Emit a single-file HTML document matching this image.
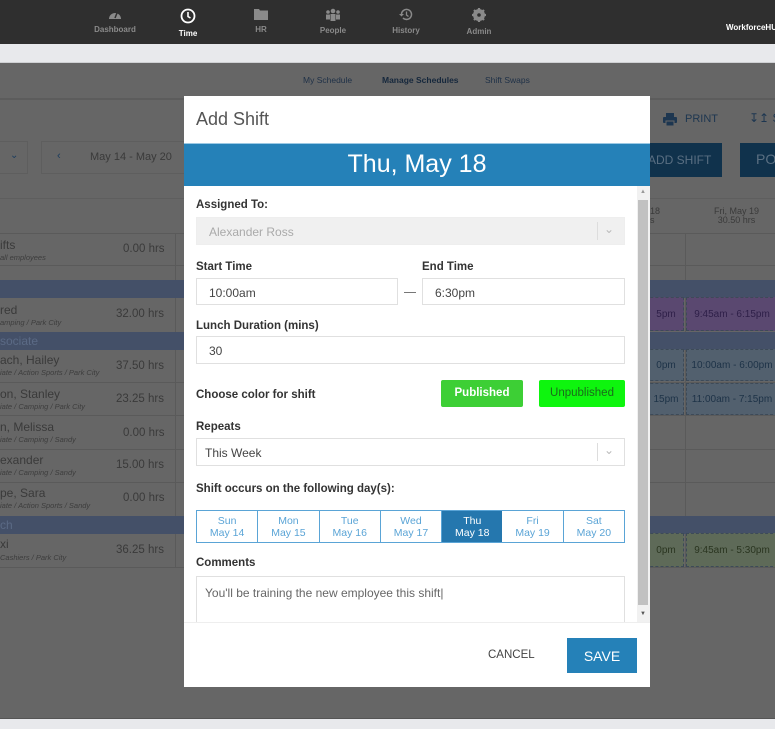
<!DOCTYPE html>
<html><head><meta charset="utf-8"><style>
*{box-sizing:border-box;margin:0;padding:0}
body{width:775px;height:729px;overflow:hidden;position:relative;background:#666;font-family:"Liberation Sans",sans-serif;}
.a{position:absolute}
.nav{left:0;top:0;width:775px;height:44px;background:#2f2f2f}
.ni{position:absolute;top:8px;width:60px;text-align:center;color:#8a8a8a;font-size:8px;font-weight:bold}
.ni svg{display:block;margin:0 auto 5px}
.t{white-space:nowrap}
.row{position:absolute;left:0;width:640px;border-bottom:1px solid #5a5a5a}
.nm{position:absolute;left:0;font-size:12px;color:#3a3a3a}
.sub{position:absolute;left:0;font-size:7.5px;font-style:italic;color:#3d3d3d}
.hrs{position:absolute;right:476px;font-size:12px;color:#3a3a3a}
.sec{position:absolute;left:0;width:775px;height:18px;background:#445068;color:#5b6a85;font-size:12px;padding:2px 0 0 0}
.cell{position:absolute;font-size:10px;text-align:center;border:1px dashed #3d4a58}
.lbl{position:absolute;left:12px;font-size:11.5px;color:#333;font-weight:bold}
.inp{position:absolute;border:1px solid #e0e0e0;background:#fff;font-size:12px;color:#444;padding-left:12px}
</style></head><body>
<div class="a nav">
 <div class="ni" style="left:85px"><svg width="14" height="12" viewBox="0 0 14 12"><path d="M1 11A6 6 0 1 1 13 11Z" fill="#8a8a8a"/><path d="M7 10L9 5" stroke="#2f2f2f" stroke-width="1.5"/></svg>Dashboard</div>
 <div class="ni" style="left:158px;color:#fff;top:8px"><svg width="16" height="16" viewBox="0 0 16 16"><circle cx="8" cy="8" r="6.5" fill="none" stroke="#fff" stroke-width="1.8"/><path d="M8 4V8.5L10.5 10" fill="none" stroke="#fff" stroke-width="1.6"/></svg>Time</div>
 <div class="ni" style="left:231px"><svg width="14" height="12" viewBox="0 0 14 12"><path d="M0 1H5L6 2.5H14V12H0Z" fill="#8a8a8a"/></svg>HR</div>
 <div class="ni" style="left:303px"><svg width="16" height="13" viewBox="0 0 16 13"><circle cx="8" cy="3" r="2.3" fill="#8a8a8a"/><circle cx="3" cy="4" r="1.8" fill="#8a8a8a"/><circle cx="13" cy="4" r="1.8" fill="#8a8a8a"/><rect x="5.5" y="6" width="5" height="7" fill="#8a8a8a"/><rect x="1" y="6.5" width="4" height="5" fill="#8a8a8a"/><rect x="11" y="6.5" width="4" height="5" fill="#8a8a8a"/></svg>People</div>
 <div class="ni" style="left:376px"><svg width="14" height="13" viewBox="0 0 14 13"><path d="M2.5 6.5A5 5 0 1 1 4 10" fill="none" stroke="#8a8a8a" stroke-width="1.5"/><path d="M0 6L2.5 8.5 5 6" fill="#8a8a8a"/><path d="M7.5 3.5V7L9.5 8.5" fill="none" stroke="#8a8a8a" stroke-width="1.3"/></svg>History</div>
 <div class="ni" style="left:449px"><svg width="14" height="14" viewBox="0 0 14 14"><circle cx="7" cy="7" r="4.5" fill="none" stroke="#8a8a8a" stroke-width="3"/><path d="M7 0V14M0 7H14M2 2L12 12M12 2L2 12" stroke="#8a8a8a" stroke-width="2.2"/><circle cx="7" cy="7" r="1.8" fill="#2f2f2f"/></svg>Admin</div>
 <div class="a t" style="left:726px;top:23px;font-size:8px;font-weight:bold;color:#fff">WorkforceHUB</div>
</div>
<div class="a" style="left:0;top:44px;width:775px;height:19px;background:#e8e9ec;border-bottom:1px solid #cfd0d3"></div>
<div class="a" style="left:0;top:98px;width:775px;height:2px;background:#5c5c5c"></div>
<div class="a t" style="left:303px;top:75px;font-size:8.5px;color:#1e3047">My Schedule</div>
<div class="a t" style="left:382px;top:75px;font-size:8.5px;color:#15273c;font-weight:bold">Manage Schedules</div>
<div class="a t" style="left:485px;top:75px;font-size:8.5px;color:#1e3047">Shift Swaps</div>
<div class="a" style="left:-2px;top:141px;width:30px;height:33px;border:1px solid #5e5e5e"></div>
<div class="a" style="left:10px;top:150px;color:#1c3d5e;font-size:10px">&#8964;</div>
<div class="a" style="left:41px;top:141px;width:150px;height:33px;border:1px solid #5e5e5e"></div>
<div class="a" style="left:57px;top:150px;color:#1c3d5e;font-size:11px">&#8249;</div>
<div class="a t" style="left:90px;top:151px;font-size:11px;color:#3a3a3a">May 14 - May 20</div>
<div class="a" style="left:663px;top:112px;width:14px;height:14px"><svg width="14" height="14" viewBox="0 0 14 14"><rect x="3" y="1" width="8" height="4" fill="#1d3650"/><rect x="0" y="5" width="14" height="6" rx="1" fill="#1d3650"/><rect x="3" y="9" width="8" height="5" fill="#1d3650" stroke="#666"/></svg></div>
<div class="a t" style="left:685px;top:113px;font-size:11px;color:#1d3650">PRINT</div>
<div class="a t" style="left:749px;top:111px;font-size:12px;color:#1d3650">&#8615;&#8613; S</div>
<div class="a" style="left:640px;top:143px;width:82px;height:34px;background:#10324c;color:#5a6f82;font-size:12px;padding:10px 0 0 8px">ADD SHIFT</div>
<div class="a" style="left:740px;top:143px;width:40px;height:34px;background:#10324c;color:#5a6f82;font-size:14px;padding:8px 0 0 16px">PO</div>
<div class="a" style="left:0;top:198px;width:775px;height:1px;background:#5e5e5e"></div>
<div class="a t" style="left:714px;top:207px;font-size:9px;color:#3a3a3a;text-align:center;line-height:9px">Fri, May 19<br>30.50 hrs</div>
<div class="a t" style="left:650px;top:207px;font-size:9px;color:#3a3a3a;line-height:9px">18<br>s</div>
<div class="a" style="left:0;top:233px;width:775px;height:1px;background:#5a5a5a"></div>
<div class="a" style="left:0;top:265px;width:775px;height:1px;background:#5a5a5a"></div>
<div class="a" style="left:685px;top:233px;width:1px;height:335px;background:#5a5a5a"></div>
<div class="a" style="left:175px;top:233px;width:1px;height:335px;background:#5a5a5a"></div>
<div class="nm t" style="top:238px">ifts</div><div class="sub t" style="top:253px">all employees</div><div class="a t" style="left:123px;top:243px;font-size:11.5px;color:#3a3a3a">0.00 hrs</div>
<div class="sec" style="top:280px"></div>
<div class="nm t" style="top:303px">red</div><div class="sub t" style="top:318px">amping / Park City</div><div class="a t" style="left:116px;top:308px;font-size:11.5px;color:#3a3a3a">32.00 hrs</div>
<div class="sec t" style="top:332px">sociate</div>
<div class="nm t" style="top:353px">ach, Hailey</div><div class="sub t" style="top:368px">iate / Action Sports / Park City</div><div class="a t" style="left:116px;top:360px;font-size:11.5px;color:#3a3a3a">37.50 hrs</div>
<div class="nm t" style="top:387px">on, Stanley</div><div class="sub t" style="top:402px">iate / Camping / Park City</div><div class="a t" style="left:116px;top:393px;font-size:11.5px;color:#3a3a3a">23.25 hrs</div>
<div class="nm t" style="top:420px">n, Melissa</div><div class="sub t" style="top:435px">iate / Camping / Sandy</div><div class="a t" style="left:123px;top:427px;font-size:11.5px;color:#3a3a3a">0.00 hrs</div>
<div class="nm t" style="top:453px">exander</div><div class="sub t" style="top:468px">iate / Camping / Sandy</div><div class="a t" style="left:116px;top:459px;font-size:11.5px;color:#3a3a3a">15.00 hrs</div>
<div class="nm t" style="top:486px">pe, Sara</div><div class="sub t" style="top:501px">iate / Action Sports / Sandy</div><div class="a t" style="left:123px;top:492px;font-size:11.5px;color:#3a3a3a">0.00 hrs</div>
<div class="sec t" style="top:516px">ch</div>
<div class="nm t" style="top:537px">xi</div><div class="sub t" style="top:553px">Cashiers / Park City</div><div class="a t" style="left:116px;top:544px;font-size:11.5px;color:#3a3a3a">36.25 hrs</div>
<div class="a" style="left:0;top:382px;width:775px;height:1px;background:#5a5a5a"></div>
<div class="a" style="left:0;top:415px;width:775px;height:1px;background:#5a5a5a"></div>
<div class="a" style="left:0;top:449px;width:775px;height:1px;background:#5a5a5a"></div>
<div class="a" style="left:0;top:482px;width:775px;height:1px;background:#5a5a5a"></div>
<div class="a" style="left:0;top:567px;width:775px;height:1px;background:#5a5a5a"></div>
<div class="cell" style="left:640px;top:297px;width:44px;height:34px;background:#5a4870;color:#2e1f48;padding:11px 0 0 8px">5pm</div>
<div class="cell" style="left:686px;top:297px;width:92px;height:34px;background:#5a4870;color:#2e1f48;padding:11px 0 0 0">9:45am - 6:15pm</div>
<div class="cell" style="left:640px;top:349px;width:44px;height:32px;background:#52606e;color:#1d3247;padding:10px 0 0 8px">0pm</div>
<div class="cell" style="left:686px;top:349px;width:92px;height:32px;background:#52606e;color:#1d3247;padding:10px 0 0 0">10:00am - 6:00pm</div>
<div class="cell" style="left:640px;top:383px;width:44px;height:32px;background:#52606e;color:#1d3247;padding:10px 0 0 8px">15pm</div>
<div class="cell" style="left:686px;top:383px;width:92px;height:32px;background:#52606e;color:#1d3247;padding:10px 0 0 0">11:00am - 7:15pm</div>
<div class="cell" style="left:640px;top:533px;width:44px;height:34px;background:#5e6a58;color:#2a3520;padding:11px 0 0 8px">0pm</div>
<div class="cell" style="left:686px;top:533px;width:92px;height:34px;background:#5e6a58;color:#2a3520;padding:11px 0 0 0">9:45am - 5:30pm</div>
<div class="a" style="left:0;top:718px;width:775px;height:11px;background:#e8e9ec;border-top:1px solid #555"></div>

<!-- modal -->
<div class="a" style="left:184px;top:96px;width:466px;height:591px;background:#fff;overflow:hidden">
 <div class="a t" style="left:12px;top:13px;font-size:18px;color:#555">Add Shift</div>
 <div class="a" style="left:0;top:47px;width:466px;height:43px;background:#2581b8;border-top:1px solid #9cc9e4;color:#fff;font-size:25px;text-align:center;padding-top:6px">Thu, May 18</div>
 <div class="a" style="left:453px;top:90px;width:13px;height:436px;background:#f1f1f1"></div>
 <div class="a" style="left:454px;top:104px;width:10px;height:405px;background:#c1c1c1"></div>
 <div class="a" style="left:456px;top:93px;font-size:6px;color:#999">&#9650;</div>
 <div class="a" style="left:456px;top:515px;font-size:6px;color:#555">&#9660;</div>
 <div class="lbl t" style="top:103px">Assigned To:</div>
 <div class="inp t" style="left:12px;top:121px;width:429px;height:28px;background:#f0f0f0;border-color:#eee;color:#aaa;padding-top:7px">Alexander Ross<span style="position:absolute;left:400px;top:4px;height:18px;border-left:1px solid #ddd"></span><span style="position:absolute;left:407px;top:4px;color:#bbb">&#8964;</span></div>
 <div class="lbl t" style="top:165px">Start Time</div>
 <div class="lbl t" style="top:165px;left:238px">End Time</div>
 <div class="inp t" style="left:12px;top:182px;width:202px;height:27px;padding-top:7px">10:00am</div>
 <div class="a" style="left:220px;top:196px;width:12px;height:1px;background:#777"></div>
 <div class="inp t" style="left:238px;top:182px;width:203px;height:27px;padding-top:7px">6:30pm</div>
 <div class="lbl t" style="top:224px">Lunch Duration (mins)</div>
 <div class="inp t" style="left:12px;top:240px;width:429px;height:28px;padding-top:7px">30</div>
 <div class="lbl t" style="top:293px">Choose color for shift</div>
 <div class="a t" style="left:257px;top:284px;width:82px;height:27px;background:#3dcf35;border-radius:2px;color:#fff;font-size:11.5px;font-weight:bold;text-align:center;padding-top:7px">Published</div>
 <div class="a t" style="left:355px;top:284px;width:86px;height:27px;background:#0ef50e;border-radius:2px;color:#1a6b1a;font-size:11.5px;text-align:center;padding-top:7px">Unpublished</div>
 <div class="lbl t" style="top:325px">Repeats</div>
 <div class="inp t" style="left:12px;top:342px;width:429px;height:28px;padding-top:7px;padding-left:8px">This Week<span style="position:absolute;left:400px;top:4px;height:18px;border-left:1px solid #ddd"></span><span style="position:absolute;left:407px;top:4px;color:#bbb">&#8964;</span></div>
 <div class="lbl t" style="top:387px">Shift occurs on the following day(s):</div>
 <div class="a" style="left:12px;top:414px;width:429px;height:33px;display:flex;border:1px solid #5aa4d6">
  <div style="flex:1;border-right:1px solid #5aa4d6;color:#5aa4d6;font-size:10.5px;text-align:center;line-height:12px;padding-top:4px">Sun<br>May 14</div>
  <div style="flex:1;border-right:1px solid #5aa4d6;color:#5aa4d6;font-size:10.5px;text-align:center;line-height:12px;padding-top:4px">Mon<br>May 15</div>
  <div style="flex:1;border-right:1px solid #5aa4d6;color:#5aa4d6;font-size:10.5px;text-align:center;line-height:12px;padding-top:4px">Tue<br>May 16</div>
  <div style="flex:1;border-right:1px solid #5aa4d6;color:#5aa4d6;font-size:10.5px;text-align:center;line-height:12px;padding-top:4px">Wed<br>May 17</div>
  <div style="flex:1;background:#2577ae;color:#fff;font-size:10.5px;text-align:center;line-height:12px;padding-top:4px">Thu<br>May 18</div>
  <div style="flex:1;border-right:1px solid #5aa4d6;color:#5aa4d6;font-size:10.5px;text-align:center;line-height:12px;padding-top:4px">Fri<br>May 19</div>
  <div style="flex:1;color:#5aa4d6;font-size:10.5px;text-align:center;line-height:12px;padding-top:4px">Sat<br>May 20</div>
 </div>
 <div class="lbl t" style="top:461px">Comments</div>
 <div class="inp t" style="left:12px;top:480px;width:429px;height:60px;padding:9px 8px;color:#666">You'll be training the new employee this shift|</div>
 <div class="a" style="left:0;top:526px;width:466px;height:65px;background:#fff;border-top:1px solid #eee"></div>
 <div class="a t" style="left:304px;top:553px;font-size:11.5px;color:#444">CANCEL</div>
 <div class="a t" style="left:383px;top:542px;width:70px;height:35px;background:#2581b8;color:#fff;font-size:14px;text-align:center;padding-top:10px">SAVE</div>
</div>
</body></html>
